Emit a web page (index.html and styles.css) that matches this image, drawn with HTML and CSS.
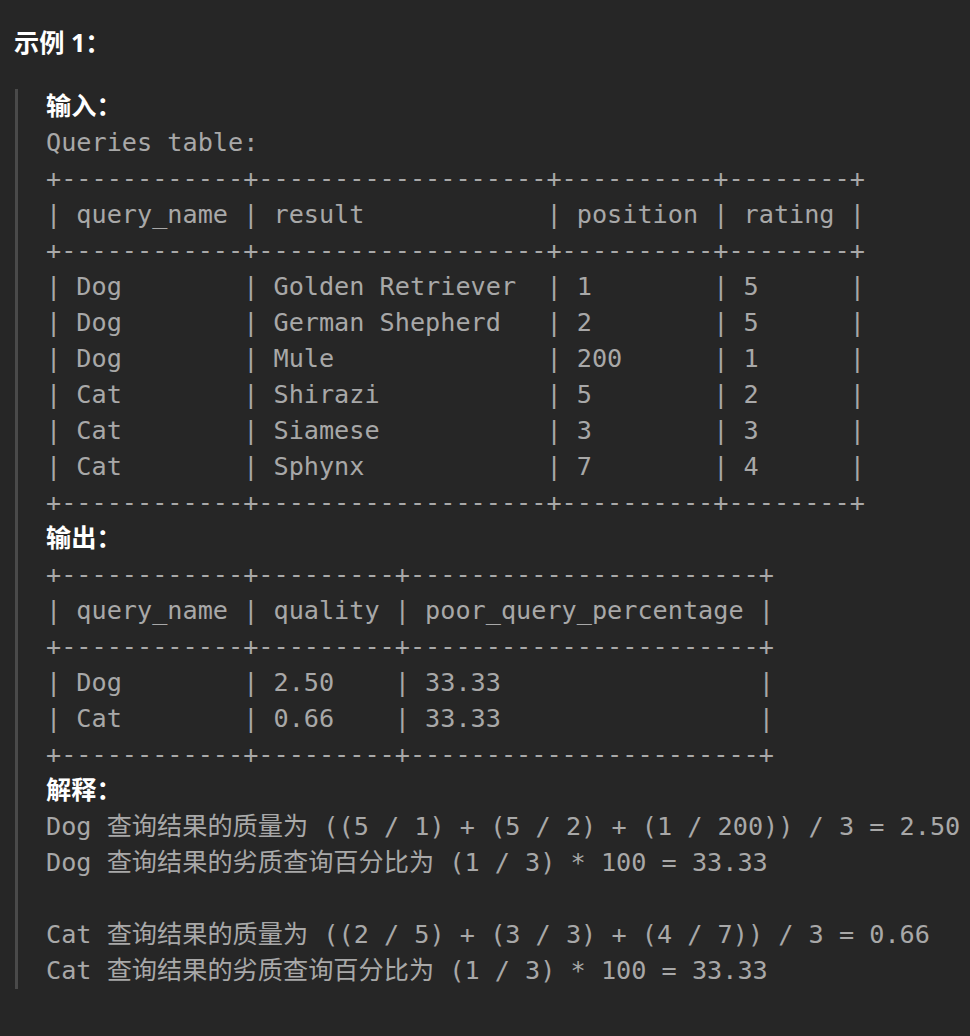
FILE: index.html
```html
<!DOCTYPE html>
<html lang="zh-CN">
<head>
  <meta charset="UTF-8" />
  <meta name="viewport" content="width=device-width, initial-scale=1.0"/>
  <title>示例 1</title>
  <link rel="stylesheet" href="styles.css">
</head>
<body>
<div class="problem">
  <p class="example-title"><strong>示例 1：</strong></p>
<pre class="example-block"><strong>输入：</strong>
Queries table:
+------------+-------------------+----------+--------+
| query_name | result            | position | rating |
+------------+-------------------+----------+--------+
| Dog        | Golden Retriever  | 1        | 5      |
| Dog        | German Shepherd   | 2        | 5      |
| Dog        | Mule              | 200      | 1      |
| Cat        | Shirazi           | 5        | 2      |
| Cat        | Siamese           | 3        | 3      |
| Cat        | Sphynx            | 7        | 4      |
+------------+-------------------+----------+--------+
<strong>输出：</strong>
+------------+---------+-----------------------+
| query_name | quality | poor_query_percentage |
+------------+---------+-----------------------+
| Dog        | 2.50    | 33.33                 |
| Cat        | 0.66    | 33.33                 |
+------------+---------+-----------------------+
<strong>解释：</strong>
Dog 查询结果的质量为 ((5 / 1) + (5 / 2) + (1 / 200)) / 3 = 2.50
Dog 查询结果的劣质查询百分比为 (1 / 3) * 100 = 33.33

Cat 查询结果的质量为 ((2 / 5) + (3 / 3) + (4 / 7)) / 3 = 0.66
Cat 查询结果的劣质查询百分比为 (1 / 3) * 100 = 33.33</pre>
</div>
</body>
</html>
```

FILE: styles.css
```css
body {
  margin: 0;
  background-color: #262626;
  color: #eee;
  font-family: "Noto Sans", "Noto Sans CJK SC", sans-serif;
}
.problem {
  padding: 24px 14px;
}
.example-title {
  margin: 0;
  font-size: 25.2px;
  line-height: 36px;
  color: #fff;
}
.example-block {
  margin: 29px 0 0 1px;
  padding-left: 28px;
  border-left: 3px solid #4a4a4a;
  font-family: "DejaVu Sans Mono", "Noto Sans CJK SC", monospace;
  font-size: 25.2px;
  line-height: 36px;
  color: #a8a8a8;
  white-space: pre;
  overflow: visible;
}
.example-block strong {
  color: #fff;
}
```
